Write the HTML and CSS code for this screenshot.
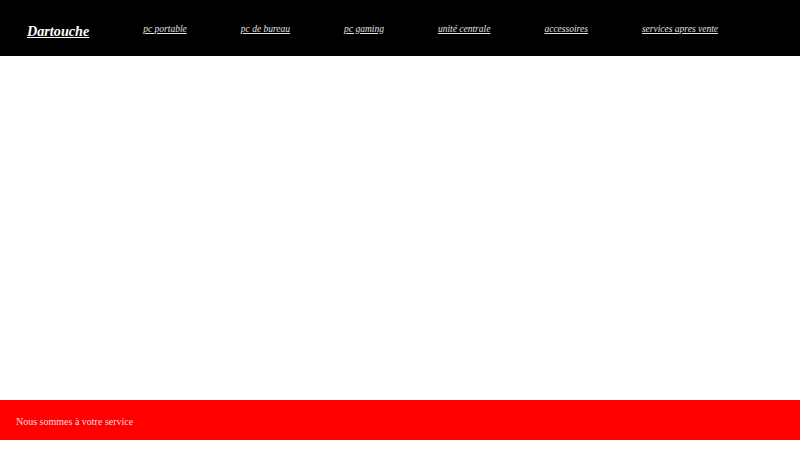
FILE: index.html
```html
<!DOCTYPE html>
<html lang="fr">
<head>
<meta charset="utf-8">
<title>Dartouche</title>
<link rel="stylesheet" href="styles.css">
</head>
<body>
<header class="top">
  <a class="logo" href="#">Dartouche</a>
  <nav class="menu">
    <a href="#">pc portable</a>
    <a href="#">pc de bureau</a>
    <a href="#">pc gaming</a>
    <a href="#">unité centrale</a>
    <a href="#">accessoires</a>
    <a href="#">services apres vente</a>
  </nav>
</header>
<main class="content"></main>
<footer class="bottom">
  <p>Nous sommes à votre service</p>
</footer>
</body>
</html>
```
FILE: styles.css
```css
html, body {
  margin: 0;
  padding: 0;
  background: #fff;
  font-family: "Liberation Serif", "Times New Roman", serif;
}
.top {
  background: #000;
  height: 56px;
  display: flex;
  align-items: center;
  padding: 0 27px;
  gap: 54px;
  box-sizing: border-box;
}
.logo {
  color: #fff;
  font-size: 14.2px;
  font-weight: bold;
  font-style: italic;
  margin-top: 6px;
}
.menu {
  display: flex;
  gap: 54px;
  align-items: center;
  margin-top: 1px;
}
.menu a {
  color: #e0e0e0;
  font-size: 9.5px;
  font-style: italic;
}
.content {
  height: 344px;
}
.bottom {
  background: #ff0000;
  height: 40px;
  display: flex;
  align-items: center;
  padding: 0 16px;
}
.bottom p {
  margin: 2px 0 0;
  color: #fbdcdc;
  font-size: 10px;
}
```
